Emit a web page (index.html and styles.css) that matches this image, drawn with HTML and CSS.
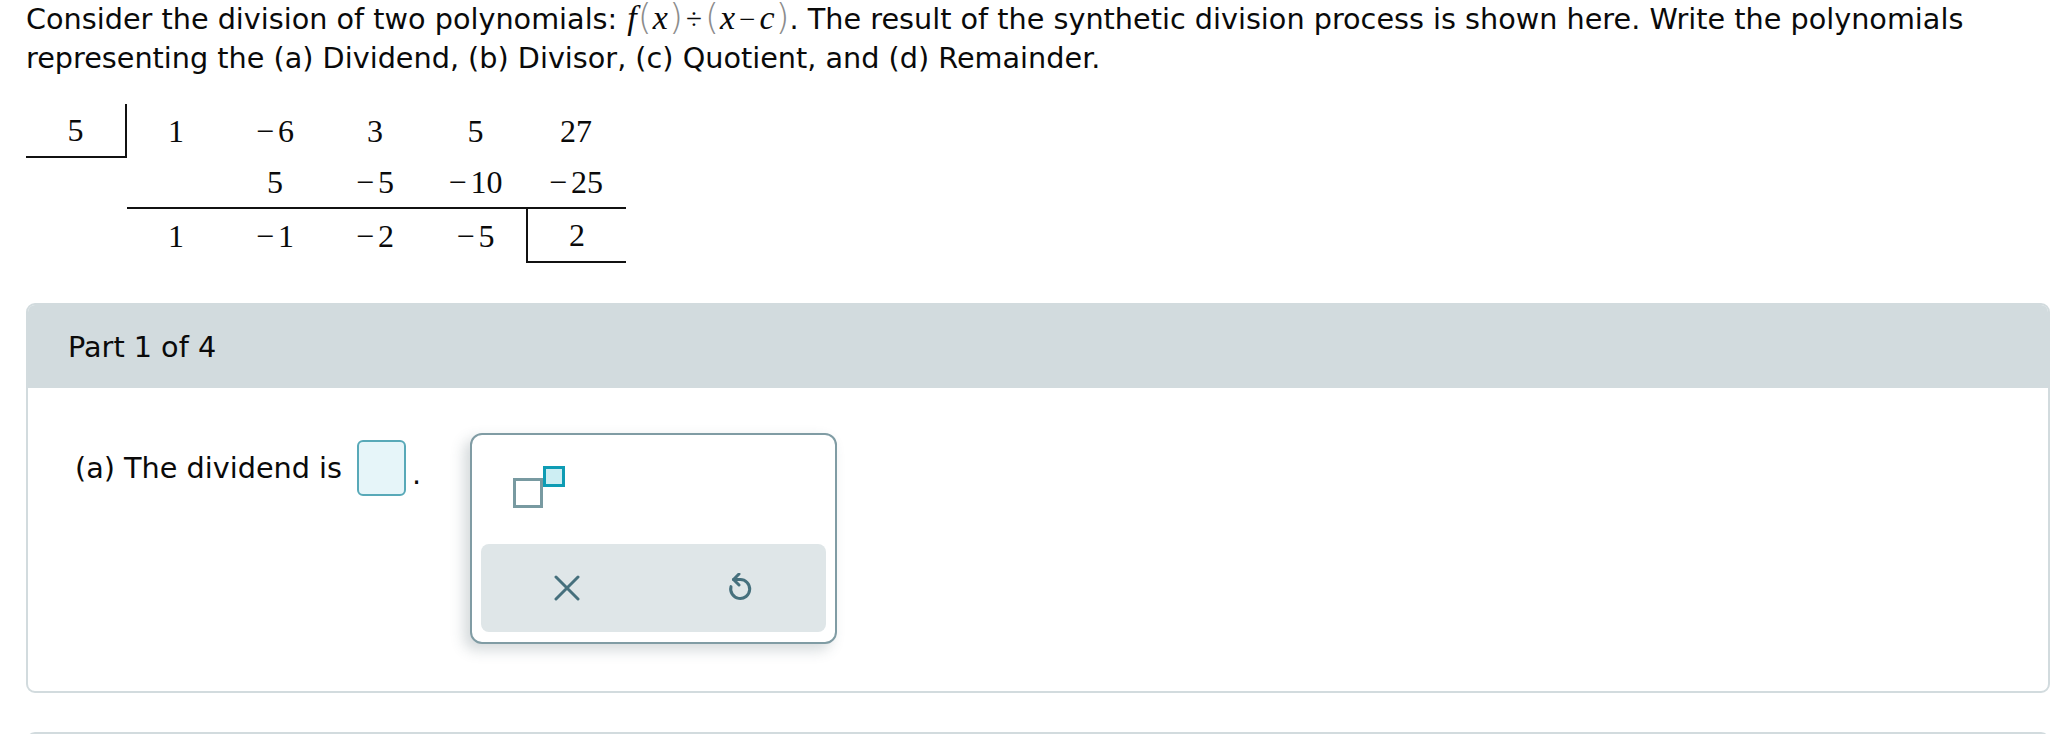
FILE: index.html
```html
<!DOCTYPE html>
<html lang="en">
<head>
<meta charset="utf-8">
<title>Synthetic division</title>
<link rel="stylesheet" href="styles.css">
</head>
<body>
<div class="page">
  <p class="prompt">Consider the division of two polynomials: <span class="math"><i>f</i><span class="paren">(</span><i>x</i><span class="paren">)</span><span class="op">÷</span><span class="paren">(</span><i>x</i><span class="op">−</span><i>c</i><span class="paren">)</span></span>. The result of the synthetic division process is shown here. Write the polynomials representing the (a) Dividend, (b) Divisor, (c) Quotient, and (d) Remainder.</p>

  <div class="synth">
    <div class="c divisor">5</div>
    <div class="c">1</div>
    <div class="c"><span class="neg">−</span>6</div>
    <div class="c">3</div>
    <div class="c">5</div>
    <div class="c">27</div>

    <div class="c r2"></div>
    <div class="c r2 ruled"></div>
    <div class="c r2 ruled">5</div>
    <div class="c r2 ruled"><span class="neg">−</span>5</div>
    <div class="c r2 ruled"><span class="neg">−</span>10</div>
    <div class="c r2 ruled"><span class="neg">−</span>25</div>

    <div class="c r3"></div>
    <div class="c r3">1</div>
    <div class="c r3"><span class="neg">−</span>1</div>
    <div class="c r3"><span class="neg">−</span>2</div>
    <div class="c r3"><span class="neg">−</span>5</div>
    <div class="c r3 remainder">2</div>
  </div>

  <section class="card">
    <header class="card-head">Part 1 of 4</header>
    <div class="card-body">
      <div class="answer">(a) The dividend is <span class="blank"></span><span class="dot">.</span></div>
      <div class="palette">
        <div class="templates">
          <svg class="sup-icon" width="54" height="42" viewBox="0 0 54 42">
            <rect x="1.5" y="13.5" width="27" height="27" fill="#fff" stroke="#789aa1" stroke-width="3"/>
            <rect x="31.5" y="1.5" width="19" height="18" fill="#cdeef3" stroke="#0e9cb4" stroke-width="3"/>
          </svg>
        </div>
        <div class="actions">
          <button class="act" type="button" aria-label="Clear">
            <svg width="26" height="26" viewBox="0 0 26 26"><path d="M2 2 L24 24 M24 2 L2 24" stroke="#46707d" stroke-width="3" stroke-linecap="round" fill="none"/></svg>
          </button>
          <button class="act" type="button" aria-label="Undo">
            <svg width="28" height="30" viewBox="0 0 28 30"><path d="M14 6.5 A9.5 9.5 0 1 1 5 13.6" stroke="#46707d" stroke-width="3" stroke-linecap="round" fill="none"/><path d="M13 1 L7.5 6.5 L13 12" stroke="#46707d" stroke-width="3" stroke-linecap="round" stroke-linejoin="round" fill="none"/><path d="M7.5 6.5 H14" stroke="#46707d" stroke-width="3" stroke-linecap="round" fill="none"/></svg>
          </button>
        </div>
      </div>
    </div>
  </section>

  <section class="card next"></section>
</div>
</body>
</html>
```

FILE: styles.css
```css
html, body {
  margin: 0;
  padding: 0;
  background: #fff;
}

body {
  font-family: "DejaVu Sans", Verdana, sans-serif;
  font-size: 28.7px;
  color: #0a0a0a;
}

.page {
  padding: 0 6px 0 26px;
}

.prompt {
  margin: 0;
  line-height: 39px;
  max-width: 2000px;
}

.math {
  font-family: "Liberation Serif", "Times New Roman", serif;
  font-size: 34px;
  white-space: nowrap;
  line-height: 30px;
}

.math i {
  font-style: italic;
  padding: 0 1px;
}

.paren {
  font-family: "DejaVu Sans", sans-serif;
  font-size: 36px;
  color: #8c8c8c;
  font-weight: 300;
}

.op {
  padding: 0 3px;
  font-size: 29px;
}

.synth {
  display: grid;
  grid-template-columns: 101px 98px 100px 100px 101px 100px;
  grid-template-rows: 54px 51px 54px;
  margin-top: 26px;
  width: 600px;
  font-family: "Liberation Serif", "Times New Roman", serif;
  font-size: 32px;
  color: #0a0a0a;
}

.c {
  display: flex;
  align-items: center;
  justify-content: center;
  box-sizing: border-box;
}

.neg {
  margin-right: 4px;
}

.divisor {
  border-right: 2px solid #111;
  border-bottom: 2px solid #111;
}

.ruled {
  border-bottom: 2px solid #111;
}

.remainder {
  border-left: 2px solid #111;
  border-bottom: 2px solid #111;
}

.card {
  margin-top: 40px;
  border: 2px solid #d2dbde;
  border-radius: 9px;
  overflow: hidden;
  background: #fff;
}

.card-head {
  background: #d2dbde;
  height: 83px;
  display: flex;
  align-items: center;
  padding-left: 40px;
}

.card-body {
  height: 303px;
  display: flex;
  align-items: flex-start;
  padding: 45px 0 0 47px;
  box-sizing: border-box;
}

.answer {
  display: flex;
  align-items: center;
  margin-top: 7px;
}

.blank {
  display: inline-block;
  width: 49px;
  height: 56px;
  box-sizing: border-box;
  border: 2px solid #58a9b8;
  border-radius: 6px;
  background: #e6f5f9;
  margin-left: 15px;
}

.dot {
  margin-left: 6px;
  margin-top: 12px;
}

.palette {
  margin-left: 49px;
  width: 367px;
  height: 211px;
  box-sizing: border-box;
  border: 2px solid #809ca4;
  border-radius: 12px;
  background: #fff;
  box-shadow: -6px 6px 14px rgba(60, 80, 90, 0.22);
  padding: 0 9px 10px 9px;
  display: flex;
  flex-direction: column;
}

.templates {
  flex: 1;
  padding: 31px 0 0 32px;
}

.sup-icon {
  display: block;
}

.actions {
  height: 88px;
  background: #dfe6e8;
  border-radius: 8px;
  display: grid;
  grid-template-columns: 1fr 1fr;
}

.act {
  border: 0;
  background: transparent;
  padding: 0;
  display: flex;
  align-items: center;
  justify-content: center;
}

.act svg {
  display: block;
}

.card.next {
  margin-top: 39px;
  height: 60px;
  border-bottom: 0;
  border-radius: 9px 9px 0 0;
}
```
